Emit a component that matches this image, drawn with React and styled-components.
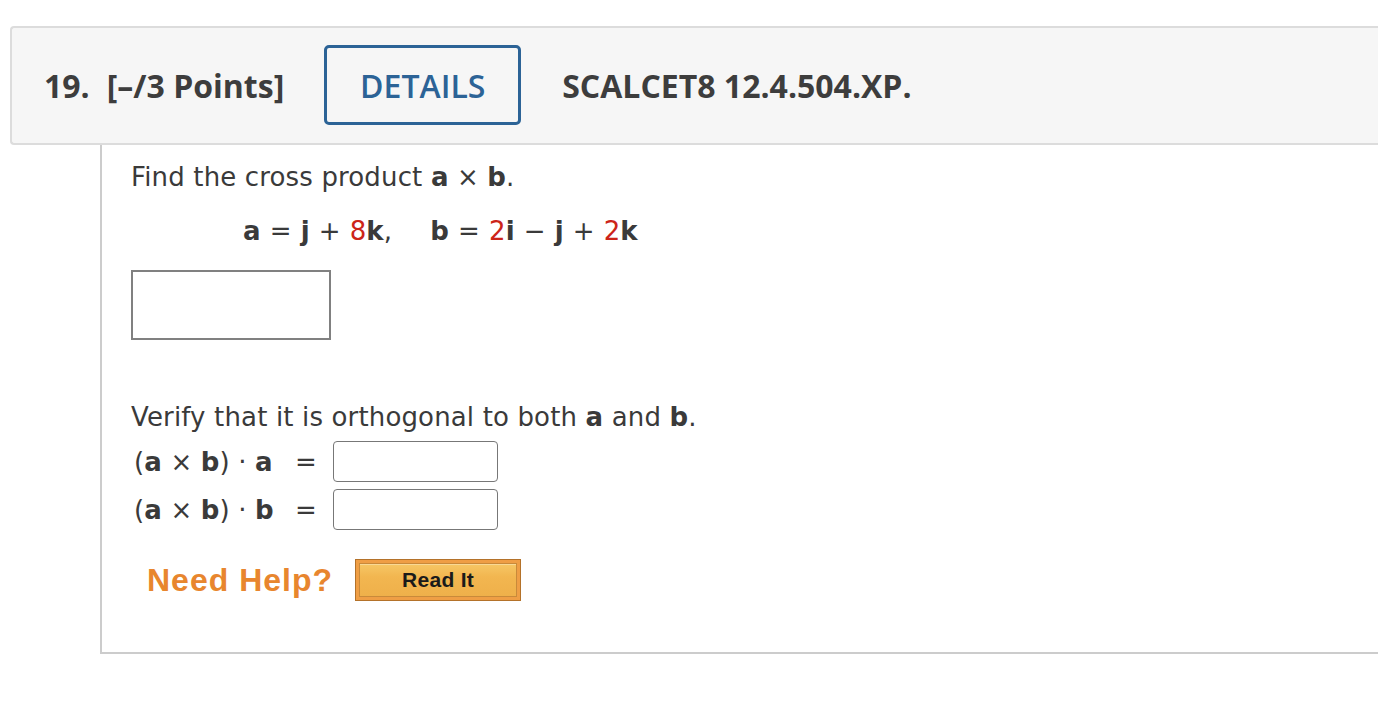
import React from "react";
import styled, { createGlobalStyle } from "styled-components";

const Global = createGlobalStyle`
  html, body { margin: 0; padding: 0; background: #fff; }
  body { width: 1378px; height: 726px; overflow: hidden; }
`;

const Page = styled.div`
  padding: 26px 0 0 10px;
`;

const Header = styled.div`
  height: 115px;
  background: #f6f6f6;
  border: 2px solid #dcdcdc;
  border-right: none;
  border-radius: 4px 0 0 4px;
  display: flex;
  align-items: center;
  padding-left: 32px;
  font-family: "Open Sans", sans-serif;
  font-weight: 700;
  font-size: 32px;
  color: #3d3d3d;
  white-space: nowrap;
`;

const Num = styled.span`
  margin-right: 17px;
`;

const Points = styled.span`
  margin-right: 40px;
`;

const DetailsButton = styled.div`
  box-sizing: border-box;
  width: 197px;
  height: 80px;
  margin-top: -1px;
  border: 3px solid #2c6396;
  border-radius: 5px;
  display: flex;
  align-items: center;
  justify-content: center;
  color: #2c6396;
  font-weight: 600;
  margin-right: 41px;
`;

const Title = styled.span``;

const Body = styled.div`
  margin-left: 90px;
  height: 507px;
  border-left: 2px solid #cccccc;
  border-bottom: 2px solid #cccccc;
  padding-left: 29px;
  font-family: "DejaVu Sans", Verdana, sans-serif;
  font-size: 26px;
  letter-spacing: 0.15px;
  color: #3a3a3a;
`;

const Para = styled.div`
  line-height: 30px;
  padding-top: ${(p) => p.$top || 0}px;
  padding-left: ${(p) => p.$indent || 0}px;
  white-space: nowrap;
`;

const B = styled.b`
  font-weight: 700;
`;

const Red = styled.span`
  color: #cc2419;
`;

const Op = styled.span`
  margin: 0 ${(p) => p.$m ?? 9}px;
`;

const BigBox = styled.div`
  box-sizing: border-box;
  width: 200px;
  height: 70px;
  border: 2px solid #808080;
  margin-top: ${(p) => p.$top}px;
`;

const Rows = styled.div`
  display: grid;
  grid-template-columns: 202px 165px;
  row-gap: 7px;
  margin-top: 9px;
  align-items: center;
`;

const Label = styled.div`
  padding-left: 3px;
  white-space: nowrap;
  display: flex;
  align-items: center;
`;

const Eq = styled.span`
  margin-left: auto;
  margin-right: 16px;
`;

const SmallBox = styled.div`
  box-sizing: border-box;
  width: 165px;
  height: 41px;
  border: 1px solid #777;
  border-radius: 4px;
  background: #fff;
`;

const HelpRow = styled.div`
  display: flex;
  align-items: center;
  margin-top: 29px;
  padding-left: 16px;
`;

const NeedHelp = styled.span`
  font-family: "Liberation Sans", Arial, sans-serif;
  font-weight: 700;
  font-size: 32px;
  color: #e8862e;
  margin-right: 22px;
  letter-spacing: 1px;
`;

const ReadIt = styled.div`
  box-sizing: border-box;
  width: 166px;
  height: 42px;
  border: 1px solid #b4722a;
  background: #ef9e45;
  padding: 3px;
  display: flex;
`;

const ReadItInner = styled.div`
  flex: 1;
  border: 1px solid #c98a3a;
  box-shadow: inset 0 1px 0 #f9d995;
  background: linear-gradient(#f6c765, #f2b650 40%, #efb04a);
  display: flex;
  align-items: center;
  justify-content: center;
  font-family: "Liberation Sans", Arial, sans-serif;
  font-weight: 700;
  font-size: 21px;
  letter-spacing: 0.3px;
  color: #1a1a1a;
`;

export default function App() {
  return (
    <>
      <Global />
      <Page>
        <Header>
          <Num>19.</Num>
          <Points>[–/3 Points]</Points>
          <DetailsButton>DETAILS</DetailsButton>
          <Title>SCALCET8 12.4.504.XP.</Title>
        </Header>
        <Body>
          <Para $top={17}>
            Find the cross product <B>a</B> × <B>b</B>.
          </Para>
          <Para $top={24} $indent={112}>
            <B>a</B>
            <Op>=</Op>
            <B>j</B>
            <Op>+</Op>
            <Red>8</Red>
            <B>k</B>,<Op $m={19}></Op>
            <B>b</B>
            <Op>=</Op>
            <Red>2</Red>
            <B>i</B>
            <Op>−</Op>
            <B>j</B>
            <Op>+</Op>
            <Red>2</Red>
            <B>k</B>
          </Para>
          <BigBox $top={24} />
          <Para $top={62}>
            Verify that it is orthogonal to both <B>a</B> and <B>b</B>.
          </Para>
          <Rows>
            <Label>
              (<B>a</B>&nbsp;×&nbsp;<B>b</B>)&nbsp;·&nbsp;<B>a</B>
              <Eq>=</Eq>
            </Label>
            <SmallBox />
            <Label>
              (<B>a</B>&nbsp;×&nbsp;<B>b</B>)&nbsp;·&nbsp;<B>b</B>
              <Eq>=</Eq>
            </Label>
            <SmallBox />
          </Rows>
          <HelpRow>
            <NeedHelp>Need Help?</NeedHelp>
            <ReadIt>
              <ReadItInner>Read It</ReadItInner>
            </ReadIt>
          </HelpRow>
        </Body>
      </Page>
    </>
  );
}
